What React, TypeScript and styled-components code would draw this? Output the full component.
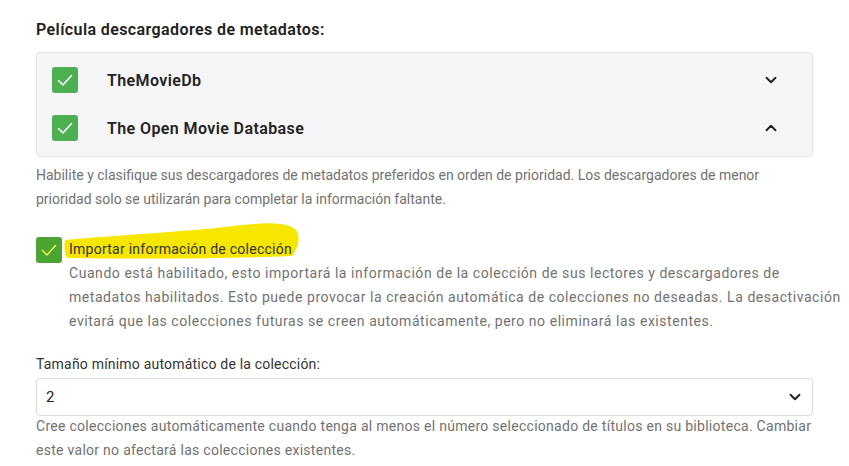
import * as React from 'react';
import styled, { createGlobalStyle } from 'styled-components';
import { ChevronDown, ChevronUp } from 'lucide-react';

const GlobalStyle = createGlobalStyle`
  body {
    margin: 0;
    background: #ffffff;
    font-family: Roboto, "Liberation Sans", sans-serif;
    color: #222;
  }
`;

const Page = styled.div`
  width: 777px;
  padding: 20px 0 0 36px;
`;

const SectionTitle = styled.h3`
  margin: 0 0 12px;
  font-size: 16px;
  line-height: 20px;
  font-weight: 600;
  letter-spacing: 0.4px;
  color: #202020;
`;

const ProviderList = styled.div`
  background: #f6f6f8;
  border: 1px solid #e2e2e6;
  border-radius: 4px;
  padding: 3px 32px 4px 15px;
`;

const ProviderRow = styled.div`
  display: flex;
  align-items: center;
  height: 48px;
`;

const ProviderName = styled.span`
  flex: 1;
  margin-left: 29px;
  font-size: 16px;
  font-weight: 600;
  letter-spacing: 0.4px;
  color: #222;
`;

const Box = styled.span<{ $bg: string }>`
  display: inline-flex;
  flex: none;
  width: 26px;
  height: 26px;
  border-radius: 3px;
  background: ${({ $bg }) => $bg};
  align-items: center;
  justify-content: center;
  position: relative;
  z-index: 1;
`;

const Help = styled.p<{ $top?: number; $spacing?: number }>`
  margin: ${({ $top = 0 }) => `${$top}px 0 0`};
  font-size: 14px;
  line-height: 24px;
  letter-spacing: ${({ $spacing = 0 }) => `${$spacing}px`};
  color: #727272;
  white-space: nowrap;
`;

const CheckRow = styled.div`
  display: flex;
  align-items: flex-start;
  margin-top: 26px;
  gap: 7px;
`;

const CheckBody = styled.div`
  flex: 1;
`;

const CheckLabel = styled.div`
  position: relative;
  font-size: 14px;
  line-height: 24px;
  letter-spacing: 0.25px;
  color: #333;
`;

const LabelText = styled.span`
  position: relative;
  z-index: 1;
`;

const Highlight = styled.svg`
  position: absolute;
  left: -5px;
  top: -17px;
  width: 236px;
  height: 42px;
  z-index: 0;
`;

const FieldLabel = styled.div`
  margin-top: 21px;
  font-size: 14px;
  line-height: 20px;
  letter-spacing: 0.2px;
  color: #333;
`;

const Select = styled.div`
  margin-top: 4px;
  height: 36px;
  border: 1px solid #dcdcdc;
  border-radius: 4px;
  display: flex;
  align-items: center;
  justify-content: space-between;
  padding: 0 8px 0 9px;
  font-size: 15px;
  color: #222;
`;

const Check = ({ bg, mark }: { bg: string; mark: string }) => (
  <Box $bg={bg}>
    <svg width="26" height="26" viewBox="0 0 26 26">
      <path d="M6.5 13.5 L11 18 L19.5 8.5" fill="none" stroke={mark} strokeWidth="1.6" strokeLinecap="round" strokeLinejoin="round" />
    </svg>
  </Box>
);

const providers = [
  { name: 'TheMovieDb', open: false },
  { name: 'The Open Movie Database', open: true },
];

export default function App() {
  return (
    <>
      <GlobalStyle />
      <Page>
        <SectionTitle>Película descargadores de metadatos:</SectionTitle>
        <ProviderList>
          {providers.map((p) => (
            <ProviderRow key={p.name}>
              <Check bg="#4caf50" mark="#ffffff" />
              <ProviderName>{p.name}</ProviderName>
              {p.open ? (
                <ChevronUp size={18} strokeWidth={2.5} color="#222" />
              ) : (
                <ChevronDown size={18} strokeWidth={2.5} color="#222" />
              )}
            </ProviderRow>
          ))}
        </ProviderList>
        <Help $top={6}>
          Habilite y clasifique sus descargadores de metadatos preferidos en orden de prioridad. Los descargadores de menor
          <br />
          prioridad solo se utilizarán para completar la información faltante.
        </Help>

        <CheckRow>
          <Check bg="#4ba532" mark="#e8f24a" />
          <CheckBody>
            <CheckLabel>
              <Highlight viewBox="0 0 236 42">
                <path
                  d="M1 20 C 40 16, 120 12, 170 6 C 200 2, 224 2, 232 10 C 237 18, 234 28, 228 36 C 160 39, 80 39, 3 38 C 0 32, 0 26, 1 20 Z"
                  fill="#f7e600"
                />
              </Highlight>
              <LabelText>Importar información de colección</LabelText>
            </CheckLabel>
            <Help $spacing={0.55}>
              Cuando está habilitado, esto importará la información de la colección de sus lectores y descargadores de
              <br />
              metadatos habilitados. Esto puede provocar la creación automática de colecciones no deseadas. La desactivación
              <br />
              evitará que las colecciones futuras se creen automáticamente, pero no eliminará las existentes.
            </Help>
          </CheckBody>
        </CheckRow>

        <FieldLabel>Tamaño mínimo automático de la colección:</FieldLabel>
        <Select>
          <span>2</span>
          <ChevronDown size={18} strokeWidth={2.5} color="#222" />
        </Select>
        <Help $top={-2} $spacing={0.28}>
          Cree colecciones automáticamente cuando tenga al menos el número seleccionado de títulos en su biblioteca. Cambiar
          <br />
          este valor no afectará las colecciones existentes.
        </Help>
      </Page>
    </>
  );
}
